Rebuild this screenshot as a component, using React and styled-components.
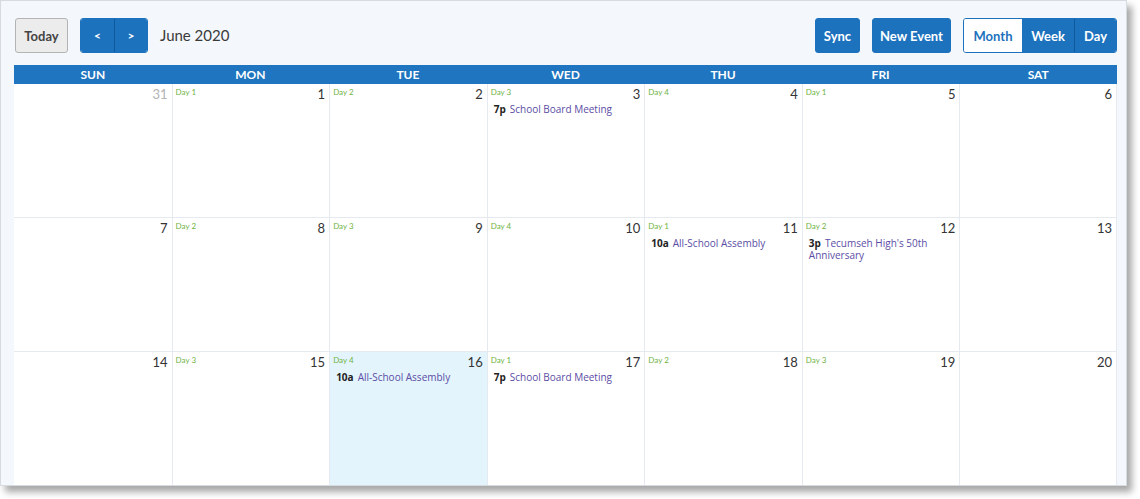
import styled, { createGlobalStyle } from "styled-components";

const GlobalStyle = createGlobalStyle`
  html, body {
    margin: 0;
    padding: 0;
    background: #ffffff;
    font-family: Lato, "Open Sans", sans-serif;
  }
`;

const BLUE = "#1d72bd";

const Page = styled.div`
  height: 499px;
  overflow: hidden;
`;

const Frame = styled.div`
  width: 1127px;
  height: 486px;
  border: 1px solid #d5dbe1;
  background: #f4f7fb;
  box-shadow: 5px 6px 7px rgba(0, 0, 0, 0.35);
  overflow: hidden;
  padding: 17px 9px 0 13px;
  box-sizing: border-box;
`;

const Toolbar = styled.div`
  display: flex;
  align-items: center;
  height: 35px;
  margin-bottom: 12px;
`;

const Left = styled.div`
  display: flex;
  align-items: center;
  gap: 12px;
  flex: 1;
  padding-left: 1px;
`;

const Right = styled.div`
  display: flex;
  align-items: center;
  gap: 12px;
`;

const Button = styled.button`
  width: ${(p) => p.$w}px;
  height: 35px;
  padding: 0;
  font-family: Lato, sans-serif;
  font-weight: 700;
  font-size: 13px;
  border-radius: 3px;
  border: 1px solid ${(p) => (p.$gray ? "#b4b4b4" : BLUE)};
  background: ${(p) => (p.$gray ? "#ececec" : BLUE)};
  color: ${(p) => (p.$gray ? "#444" : "#fff")};
  cursor: pointer;
`;

const Group = styled.div`
  display: flex;
  border-radius: 3px;
  overflow: hidden;
  border: 1px solid ${BLUE};
  height: 35px;
  box-sizing: border-box;
`;

const GroupButton = styled.button`
  width: ${(p) => p.$w}px;
  border: none;
  border-left: ${(p) => (p.$split ? "1px solid #0f5a9c" : "none")};
  background: ${(p) => (p.$active ? "#fff" : BLUE)};
  color: ${(p) => (p.$active ? BLUE : "#fff")};
  font-family: Lato, sans-serif;
  font-weight: 700;
  font-size: ${(p) => p.$fs || 13}px;
  padding: 0;
  cursor: pointer;
  display: flex;
  align-items: center;
  justify-content: center;
`;

const Title = styled.span`
  font-size: 15px;
  color: #3a3a3a;
  margin-top: -1px;
`;

const Calendar = styled.div`
  width: 1103px;
`;

const HeaderRow = styled.div`
  display: grid;
  grid-template-columns: repeat(7, 1fr);
  background: #1f75bf;
  height: 19px;
`;

const HeaderCell = styled.div`
  color: #fff;
  font-weight: 700;
  font-size: 12px;
  text-align: center;
  line-height: 19px;
`;

const Week = styled.div`
  display: grid;
  grid-template-columns: repeat(7, 1fr);
  height: 134px;
  border-bottom: 1px solid #e4eaf0;
  box-sizing: border-box;
`;

const Cell = styled.div`
  background: ${(p) => (p.$today ? "#e4f4fc" : "#fff")};
  border-left: 1px solid #e4eaf0;
  padding: 3px 4px 0 3px;
  box-sizing: border-box;
  &:first-child {
    border-left: none;
  }
  &:last-child {
    border-right: 1px solid #e4eaf0;
  }
`;

const CellTop = styled.div`
  display: flex;
  justify-content: space-between;
  align-items: flex-start;
  height: 15px;
`;

const DayLabel = styled.span`
  font-size: 8px;
  color: #6fb33f;
`;

const DateNum = styled.span`
  font-size: 13px;
  color: ${(p) => (p.$muted ? "#b2b2b2" : "#333")};
  margin-left: auto;
  line-height: 14px;
`;

const Event = styled.div`
  margin: 1px 0 0 3px;
  font-size: 10px;
  line-height: 12px;
  color: #5b4ca5;
  font-family: "Open Sans", Lato, sans-serif;
`;

const Time = styled.b`
  color: #222;
  font-weight: 700;
  margin-right: 4px;
`;

const days = ["SUN", "MON", "TUE", "WED", "THU", "FRI", "SAT"];

const weeks = [
  [
    { n: 31, muted: true },
    { n: 1, d: 1 },
    { n: 2, d: 2 },
    { n: 3, d: 3, ev: { t: "7p", name: "School Board Meeting" } },
    { n: 4, d: 4 },
    { n: 5, d: 1 },
    { n: 6 },
  ],
  [
    { n: 7 },
    { n: 8, d: 2 },
    { n: 9, d: 3 },
    { n: 10, d: 4 },
    { n: 11, d: 1, ev: { t: "10a", name: "All-School Assembly" } },
    { n: 12, d: 2, ev: { t: "3p", name: "Tecumseh High's 50th Anniversary" } },
    { n: 13 },
  ],
  [
    { n: 14 },
    { n: 15, d: 3 },
    { n: 16, d: 4, today: true, ev: { t: "10a", name: "All-School Assembly" } },
    { n: 17, d: 1, ev: { t: "7p", name: "School Board Meeting" } },
    { n: 18, d: 2 },
    { n: 19, d: 3 },
    { n: 20 },
  ],
];

const App = () => {
  return (
    <Page>
      <GlobalStyle />
      <Frame>
        <Toolbar>
          <Left>
            <Button $gray $w={53}>
              Today
            </Button>
            <Group>
              <GroupButton $w={33} $fs={12}>
                &lt;
              </GroupButton>
              <GroupButton $split $w={33} $fs={12}>
                &gt;
              </GroupButton>
            </Group>
            <Title>June 2020</Title>
          </Left>
          <Right>
            <Button $w={45}>Sync</Button>
            <Button $w={79}>New Event</Button>
            <Group>
              <GroupButton $active $w={58}>
                Month
              </GroupButton>
              <GroupButton $w={52}>Week</GroupButton>
              <GroupButton $split $w={42}>
                Day
              </GroupButton>
            </Group>
          </Right>
        </Toolbar>
        <Calendar>
          <HeaderRow>
            {days.map((d) => (
              <HeaderCell key={d}>{d}</HeaderCell>
            ))}
          </HeaderRow>
          {weeks.map((w, i) => (
            <Week key={i}>
              {w.map((c) => (
                <Cell key={c.n} $today={c.today}>
                  <CellTop>
                    {c.d && <DayLabel>Day {c.d}</DayLabel>}
                    <DateNum $muted={c.muted}>{c.n}</DateNum>
                  </CellTop>
                  {c.ev && (
                    <Event>
                      <Time>{c.ev.t}</Time>
                      {c.ev.name}
                    </Event>
                  )}
                </Cell>
              ))}
            </Week>
          ))}
        </Calendar>
      </Frame>
    </Page>
  );
};

export default App;
